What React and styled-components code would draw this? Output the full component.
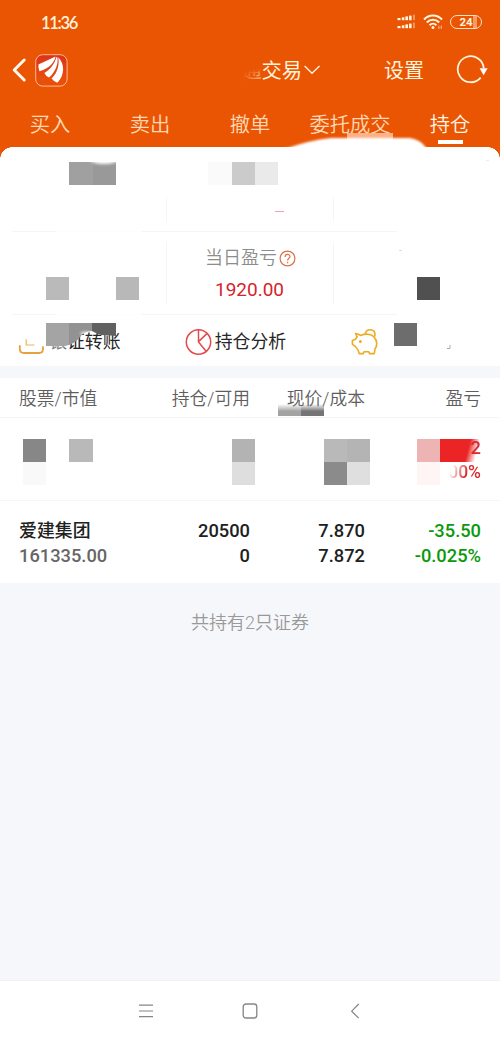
import React from "react";
import styled, { createGlobalStyle } from "styled-components";

const tabs = ["买入", "卖出", "撤单", "委托成交", "持仓"];

const UNIT = 23.15;

// hidden values, [column, row, width, height, colour] counted in mosaic cells
const summaryTiles = [
	[3, 7, 1, 1, "#a0a0a0"],
	[4, 7, 1, 1, "#999999"],
	[9, 7, 1, 1, "#fafafa"],
	[10, 7, 1, 1, "#cbcbcb"],
	[11, 7, 1, 1, "#eaeaea"],
	[2, 12, 1, 1, "#bababa"],
	[5, 12, 1, 1, "#b8b8b8"],
	[18, 12, 1, 1, "#505050"],
	[17, 14, 1, 1, "#6d6d6d"],
];

const holdingTiles = [
	[1, 19, 1, 1, "#878787"],
	[1, 20, 1, 1, "#f9f9f9"],
	[3, 19, 1, 1, "#b9b9b9"],
	[10, 19, 1, 1, "#b3b3b3"],
	[10, 20, 1, 1, "#dedede"],
	[14, 19, 1, 1, "#b9b9b9"],
	[15, 19, 1, 1, "#b4b4b4"],
	[14, 20, 1, 1, "#8b8b8b"],
	[15, 20, 1, 1, "#dfdfdf"],
	[18, 19, 1, 1, "#edb4b3"],
	[18, 20, 1, 1, "#fff5f5"],
];

const Mosaic = ({ tiles, top }) =>
	tiles.map(([col, row, w, h, color]) => (
		<Tile
			key={`${col}-${row}`}
			$x={Math.round(col * UNIT)}
			$y={Math.round(row * 23.09) - top}
			$w={Math.round((col + w) * UNIT) - Math.round(col * UNIT)}
			$h={Math.round((row + h) * 23.09) - Math.round(row * 23.09)}
			$color={color}
		/>
	));

const Status = () => (
	<StatusBar>
		<Time>11:36</Time>
		<svg width="20" height="16" viewBox="0 0 20 16" fill="#fff4dc">
			{[0, 8].map((y) => (
				<g key={y} transform={`translate(0 ${y})`}>
					<rect x="0.5" y="4" width="3" height="2.2" />
					<rect x="4.8" y="3.3" width="2.6" height="2.9" />
					<rect x="8.4" y="2.4" width="2.6" height="3.8" />
					<rect x="12" y="1.6" width="2.6" height="4.6" />
					<rect x="16" y="0.6" width="2" height="5.6" opacity="0.4" />
				</g>
			))}
		</svg>
		<Wifi width="20" height="16" viewBox="0 0 20 16" fill="none" stroke="#fff4dc" strokeWidth="2.1">
			<path d="M1 5.4C6 .2 14 .2 19 5.4" />
			<path d="M3.8 8.4C7.2 4.9 12.8 4.9 16.2 8.4" />
			<path d="M6.6 11.2C8.6 9.2 11.4 9.2 13.4 11.2" />
			<circle cx="10" cy="13.4" r="1.5" fill="#fff4dc" stroke="none" />
			<path d="M15.9 15v-3.2M18.2 11.6v3.2" strokeWidth="1" opacity=".7" />
		</Wifi>
		<Battery>24</Battery>
	</StatusBar>
);

const Title = () => (
	<TitleBar>
		<svg width="16" height="26" viewBox="0 0 16 26" fill="none" stroke="#fffaf0" strokeWidth="3" strokeLinecap="round" strokeLinejoin="round">
			<path d="M12.2 3L2.2 13L12.2 23" />
		</svg>
		<Logo width="33" height="33" viewBox="0 0 33 33">
			<defs>
				<linearGradient id="logo" x1="0" y1="0" x2="0" y2="1">
					<stop offset="0" stopColor="#dc321c" />
					<stop offset="0.8" stopColor="#e8500a" />
				</linearGradient>
			</defs>
			<rect x="0.7" y="0.7" width="31.4" height="31.4" rx="7" fill="url(#logo)" stroke="#ffb98c" strokeWidth="1" />
			<g fill="#fff">
				<path d="M3.4 10.5C9 7.7 15 5.2 20.5 2.6C20 7 15.5 14.5 4.4 17.2Q3.2 14 3.4 10.5Z" />
				<path d="M21.3 3C20 10 14.5 16 9.3 18.9Q11 22.3 14 23.6C20.3 18 23.6 10 22.4 3.4Z" />
				<path d="M23.2 3.2C24.7 10.5 22.4 18.8 16.6 24.6Q18.5 27.5 22.4 28.8C29.8 21 30 10 23.2 3.2Z" />
			</g>
		</Logo>
		<Account>
			普通交易
			<Smudge />
		</Account>
		<svg width="18" height="12" viewBox="0 0 18 12" fill="none" stroke="#fff4dc" strokeWidth="1.4">
			<path d="M1.6 2L9 9.3L16.5 2" />
		</svg>
		<Settings>设置</Settings>
		<svg width="32" height="30" viewBox="0 0 32 30">
			<path d="M24.7 22.6A13 13 0 1 1 27.7 13" fill="none" stroke="#fff4dc" strokeWidth="1.8" />
			<path d="M23.6 13.3h8l-4 7z" fill="#fff" />
		</svg>
	</TitleBar>
);

const Summary = () => (
	<Card>
		<Band $height={84}>
			<Cell />
			<Cell $line="short" />
			<Cell $line="short" />
		</Band>
		<Rule />
		<Band $height={82}>
			<Cell />
			<Cell $line="tall">
				<Label>
					当日盈亏
					<svg width="17" height="17" viewBox="0 0 17 17" fill="none" stroke="#dd7044" strokeWidth="1.2">
						<circle cx="8.5" cy="8.5" r="7.4" />
						<path d="M6.1 6.9C6.1 3.5 11 3.6 11 6.6C11 8.3 8.6 8.4 8.6 10.5M8.6 11.8v1.4" />
					</svg>
				</Label>
				<Profit>1920.00</Profit>
			</Cell>
			<Cell $line="tall" />
		</Band>
		<Rule />
		<Actions>
			<Action $pad={18}>
				<svg width="27" height="28" viewBox="0 0 27 28" fill="none" stroke="#e6a23c" strokeWidth="1.8" strokeLinecap="round">
					<path d="M1.8 18v3Q1.8 25 6 25H21Q25 25 25 21v-2" />
					<path d="M8.2 11.5V17H16" strokeWidth="1.2" opacity="0.8" />
				</svg>
				<Caption $gap={4}>银证转账</Caption>
			</Action>
			<Action $pad={18}>
				<svg width="28" height="28" viewBox="0 0 28 28" fill="none" stroke="#e34a4c" strokeWidth="1.5">
					<circle cx="13.5" cy="14" r="12.2" />
					<path d="M13.5 1.8V14L21.3 23.4M13.5 13.6L22.2 5.4" />
				</svg>
				<Caption $gap={2}>持仓分析</Caption>
			</Action>
			<Action $pad={18}>
				<svg width="28" height="30" viewBox="0 0 28 30" fill="none" stroke="#edac25" strokeWidth="1.6" strokeLinejoin="round">
					<path d="M4.5 6.5Q7.8 7 9.4 8.4Q18 5.3 22.8 9.6Q28 15.5 24 22.2L23.3 26.6H18.5L17.8 24.7H13L12.2 26.6H8.2L7.2 23.4L4.3 19.4L1.4 17.3V13.4L4.5 12.3Q5.4 10.5 6.2 9.8Z" />
					<path d="M14 7.4Q15 2.2 20.2 2.8Q25 4 23.7 9.5" />
					<circle cx="9.4" cy="14.5" r="0.7" fill="#e67b32" />
				</svg>
			</Action>
		</Actions>
		<Mosaic tiles={summaryTiles} top={147} />
		<Feather $x={90} $y={8} $w={28} $h={9} />
		<TransferCover />
		<Feather $x={390} $y={212} $w={54} $h={12} />
		<Speck $x={275} $y={64} $w={9} $color="#eba4ad" />
		<Speck $x={399} $y={103} $w={3} $color="#dddddd" />
		<Speck $x={486} $y={13} $w={3} $color="#ececec" />
		<Corner width="4" height="5" viewBox="0 0 4 5" fill="none" stroke="#aaa">
			<path d="M3 0V3.5H0" />
		</Corner>
	</Card>
);

// the covered 转账 label with its worn-out lower edge
const TransferCover = () => (
	<CoverArt width="110" height="44" viewBox="0 0 110 44">
		<defs>
			<filter id="wear" x="-20%" y="-20%" width="140%" height="140%">
				<feGaussianBlur stdDeviation="1.1" />
			</filter>
			<clipPath id="strip">
				<path d="M31 10H101V23Q92 22 86 22Q80 20 77 18Q69 18 65 24Q60 31 50 33H31Z" />
			</clipPath>
		</defs>
		<rect x="31" y="28" width="20" height="12" fill="#fff" opacity="0.45" filter="url(#wear)" />
		<g clipPath="url(#strip)">
			<rect x="31" y="10" width="23" height="23" fill="#a4a4a4" />
			<rect x="54" y="10" width="23" height="23" fill="#929292" />
			<rect x="77" y="10" width="24" height="16" fill="#616161" />
			<ellipse cx="71" cy="20.5" rx="6" ry="2.6" fill="#fff" opacity="0.6" filter="url(#wear)" />
		</g>
	</CoverArt>
);

const App = () => (
	<Screen>
		<Global />
		<Header>
			<Status />
			<Title />
			<Tabs>
				{tabs.map((tab) => (
					<Tab key={tab} $active={tab === "持仓"}>
						{tab}
					</Tab>
				))}
			</Tabs>
			<TabCover width="160" height="30" viewBox="0 0 160 30">
				<defs>
					<filter id="soft" x="-10%" y="-30%" width="120%" height="160%">
						<feGaussianBlur stdDeviation="1.3" />
					</filter>
				</defs>
				<rect x="67" y="3" width="46" height="8" fill="#ffc29f" opacity="0.85" />
				<path d="M5 19Q30 10 51 8H130Q140 9 148 20V32H5Z" fill="#fff" filter="url(#soft)" />
			</TabCover>
		</Header>
		<Summary />
		<Holdings>
			<Columns $head>
				<span>股票/市值</span>
				<span>持仓/可用</span>
				<span>现价/成本</span>
				<span>盈亏</span>
			</Columns>
			<Holding>
				<Columns />
				<Columns />
			</Holding>
			<Holding>
				<Columns>
					<Name>爱建集团</Name>
					<span>20500</span>
					<span>7.870</span>
					<Loss>-35.50</Loss>
				</Columns>
				<Columns>
					<Value>161335.00</Value>
					<span>0</span>
					<span>7.872</span>
					<Loss>-0.025%</Loss>
				</Columns>
			</Holding>
			<Mosaic tiles={holdingTiles} top={378} />
			<PriceCover />
			<RedFade />
			<Remains>
				<span>2</span>
				<Percent>00%</Percent>
			</Remains>
		</Holdings>
		<Total>共持有2只证券</Total>
		<SystemNav>
			<svg width="16" height="16" viewBox="0 0 16 16" stroke="#858585" strokeWidth="1.2">
				<path d="M1 2.2h14M1 8h14M1 13.7h14" />
			</svg>
			<svg width="16" height="16" viewBox="0 0 16 16" fill="none" stroke="#858585" strokeWidth="1.3">
				<rect x="1.2" y="1" width="13.6" height="14" rx="2.8" />
			</svg>
			<svg width="16" height="16" viewBox="0 0 16 16" fill="none" stroke="#858585" strokeWidth="1.2">
				<path d="M12.7 1L5.7 8.2L12.7 15.2" />
			</svg>
		</SystemNav>
	</Screen>
);

export default App;

const Global = createGlobalStyle`
	body {
		margin: 0;
		font-family: Roboto, "Noto Sans CJK SC", sans-serif;
	}
	svg {
		display: block;
		flex: none;
	}
`;

const Screen = styled.div`
	display: flex;
	flex-direction: column;
	width: 500px;
	height: 1041px;
	overflow: hidden;
	background: #f6f7fa;
`;

const Header = styled.header`
	position: relative;
	flex: none;
	height: 147px;
	background: #ea5504;
	color: #fff4dc;
`;

const StatusBar = styled.div`
	display: flex;
	align-items: center;
	box-sizing: border-box;
	height: 44px;
	padding: 0 18px 0 41px;
`;

const Time = styled.span`
	margin-right: auto;
	font-family: Lato, "Noto Sans CJK SC", sans-serif;
	font-weight: 600;
	font-size: 16.5px;
	line-height: 20px;
	letter-spacing: -1.3px;
	padding-top: 1px;
`;

const Wifi = styled.svg`
	margin: 0 7px 0 6px;
`;

const Battery = styled.span`
	box-sizing: border-box;
	width: 32px;
	height: 14px;
	border: 1.4px solid #ffe2c4;
	border-radius: 7px;
	background: linear-gradient(90deg, transparent 72%, #f49b6c 72%, #f49b6c 86%, transparent 86%);
	font: bold 11.5px/12px Roboto, sans-serif;
	text-align: center;
`;

const TitleBar = styled.div`
	display: flex;
	align-items: center;
	height: 52px;
	padding: 0 12px;
`;

const Logo = styled.svg`
	margin-left: 7px;
`;

const Account = styled.span`
	position: relative;
	margin-left: 153px;
	width: 82px;
	font-size: 20.3px;
	line-height: 28px;
	padding-top: 2px;
	white-space: nowrap;
`;

const Smudge = styled.i`
	position: absolute;
	left: -4px;
	top: -1px;
	width: 45px;
	height: 32px;
	background:
		linear-gradient(90deg, #ea5504 26px, rgba(234, 85, 4, 0.7) 30px, transparent 44px),
		linear-gradient(175deg, #ea5504 54%, rgba(234, 85, 4, 0.4) 68%);
	filter: blur(0.8px);
`;

const Settings = styled.span`
	margin-left: auto;
	margin-right: 32px;
	font-size: 20px;
	line-height: 28px;
	padding-top: 2px;
`;

const Tabs = styled.nav`
	display: grid;
	grid-template-columns: repeat(5, 1fr);
	height: 51px;
`;

const Tab = styled.span`
	display: flex;
	flex-direction: column;
	align-items: center;
	font-size: 20.3px;
	font-weight: 350;
	line-height: 30px;
	padding-top: 14px;
	color: ${(props) => (props.$active ? "#fff6e4" : "#ffd9b5")};
	&::after {
		content: "";
		width: 25px;
		height: 4px;
		background: ${(props) => (props.$active ? "#fff" : "transparent")};
	}
`;

const TabCover = styled.svg`
	position: absolute;
	left: 280px;
	top: 130px;
`;

const Card = styled.section`
	position: relative;
	flex: none;
	height: 219px;
	background: #fff;
	clip-path: inset(0);
	margin-bottom: 12px;
	&::before {
		content: "";
		position: absolute;
		inset: 0 0 auto;
		height: 12px;
		background:
			radial-gradient(circle at 12px 12px, transparent 11.5px, #ea5504 12px) 0 0 / 12px 12px no-repeat,
			radial-gradient(circle at 0 12px, transparent 11.5px, #ea5504 12px) 100% 0 / 12px 12px no-repeat;
	}
`;

const Band = styled.div`
	display: grid;
	grid-template-columns: 166px 167px 167px;
	height: ${(props) => props.$height}px;
`;

const Cell = styled.div`
	display: flex;
	flex-direction: column;
	align-items: center;
	background: linear-gradient(#f6f6f6, #f6f6f6) no-repeat;
	background-size: ${(props) => (props.$line === "tall" ? "1px 63px" : props.$line ? "1px 25px" : "0 0")};
	background-position: ${(props) => (props.$line === "tall" ? "0 10px" : "0 50px")};
`;

const Rule = styled.hr`
	height: 1px;
	margin: 0 12px;
	border: 0;
	background: linear-gradient(90deg, #f5f5f5 44px, #fdfdfd 44px, #fdfdfd 130px, #f5f5f5 130px, #f5f5f5 385px, #fff 385px);
`;

const Label = styled.span`
	display: flex;
	align-items: center;
	gap: 2px;
	margin-top: 13px;
	margin-left: 2px;
	font-size: 18px;
	font-weight: 350;
	line-height: 26px;
	color: #8c8c8c;
`;

const Profit = styled.span`
	margin-top: 6px;
	font-size: 19px;
	line-height: 26px;
	color: #d5232c;
`;

const Actions = styled.div`
	display: grid;
	grid-template-columns: repeat(3, 1fr);
	height: 53px;
`;

const Action = styled.div`
	display: flex;
	align-items: center;
	padding-left: ${(props) => props.$pad}px;
`;

const Caption = styled.span`
	margin-left: ${(props) => props.$gap}px;
	font-size: 17.9px;
	line-height: 26px;
	padding-top: 1px;
	color: #262626;
	white-space: nowrap;
`;

const Tile = styled.i`
	position: absolute;
	left: ${(props) => props.$x}px;
	top: ${(props) => props.$y}px;
	width: ${(props) => props.$w}px;
	height: ${(props) => props.$h}px;
	background: ${(props) => props.$color};
`;

const Feather = styled.i`
	position: absolute;
	left: ${(props) => props.$x}px;
	top: ${(props) => props.$y}px;
	width: ${(props) => props.$w}px;
	height: ${(props) => props.$h}px;
	border-radius: 50%;
	background: #fff;
	filter: blur(1.5px);
`;

const CoverArt = styled.svg`
	position: absolute;
	left: 15px;
	top: 166px;
`;

const Speck = styled.i`
	position: absolute;
	left: ${(props) => props.$x}px;
	top: ${(props) => props.$y}px;
	width: ${(props) => props.$w}px;
	height: 1px;
	background: ${(props) => props.$color};
`;

const Corner = styled.svg`
	position: absolute;
	left: 447px;
	top: 198px;
`;

const Holdings = styled.section`
	position: relative;
	flex: none;
	height: 205px;
	background: #fff;
`;

const Columns = styled.div`
	display: grid;
	grid-template-columns: 130px 101px 115px 116px;
	box-sizing: border-box;
	height: ${(props) => (props.$head ? 40 : 25)}px;
	padding: 0 19px;
	font-size: ${(props) => (props.$head ? 17.8 : 18.3)}px;
	font-weight: ${(props) => (props.$head ? 350 : 500)};
	line-height: ${(props) => (props.$head ? 41 : 25)}px;
	color: ${(props) => (props.$head ? "#5e5e5e" : "#202020")};
	border-bottom: ${(props) => (props.$head ? "1px solid #f6f6f6" : "0")};
	text-align: right;
	white-space: nowrap;
	> :first-child {
		text-align: left;
	}
`;

const Holding = styled.div`
	box-sizing: border-box;
	height: 82px;
	padding-top: 17px;
	& + & {
		border-top: 1px solid #f6f6f6;
		height: 83px;
	}
`;

const Name = styled.span`
	font-size: 17.9px;
`;

const Value = styled.span`
	color: #666;
`;

const Loss = styled.span`
	color: #0a9a0a;
`;

const PriceCover = styled.i`
	position: absolute;
	left: 278px;
	top: 26px;
	width: 46px;
	height: 12px;
	background: linear-gradient(90deg, #a3a3a3 50%, #757575 50%);
	mask-image: linear-gradient(transparent, #000 60%);
`;

const RedFade = styled.i`
	position: absolute;
	left: 440px;
	top: 61px;
	width: 39px;
	height: 23px;
	background: #eb2425;
	mask-image: linear-gradient(105deg, #000 68%, transparent 90%);
`;

const Remains = styled.div`
	position: absolute;
	right: 19px;
	top: 57px;
	display: flex;
	flex-direction: column;
	align-items: flex-end;
	font-size: 18.3px;
	font-weight: 500;
	line-height: 25px;
	color: #dc2a2d;
`;

const Percent = styled.span`
	font-size: 17.5px;
	mask-image: linear-gradient(110deg, transparent 15%, #000 55%);
`;

const Total = styled.p`
	flex: 1;
	margin: 0;
	padding-top: 27px;
	font-size: 18px;
	font-weight: 350;
	line-height: 26px;
	text-align: center;
	color: #999;
`;

const SystemNav = styled.footer`
	display: flex;
	flex: none;
	justify-content: center;
	align-items: center;
	gap: 88px;
	height: 60px;
	border-top: 1px solid #f1f1f1;
	background: #fff;
`;
